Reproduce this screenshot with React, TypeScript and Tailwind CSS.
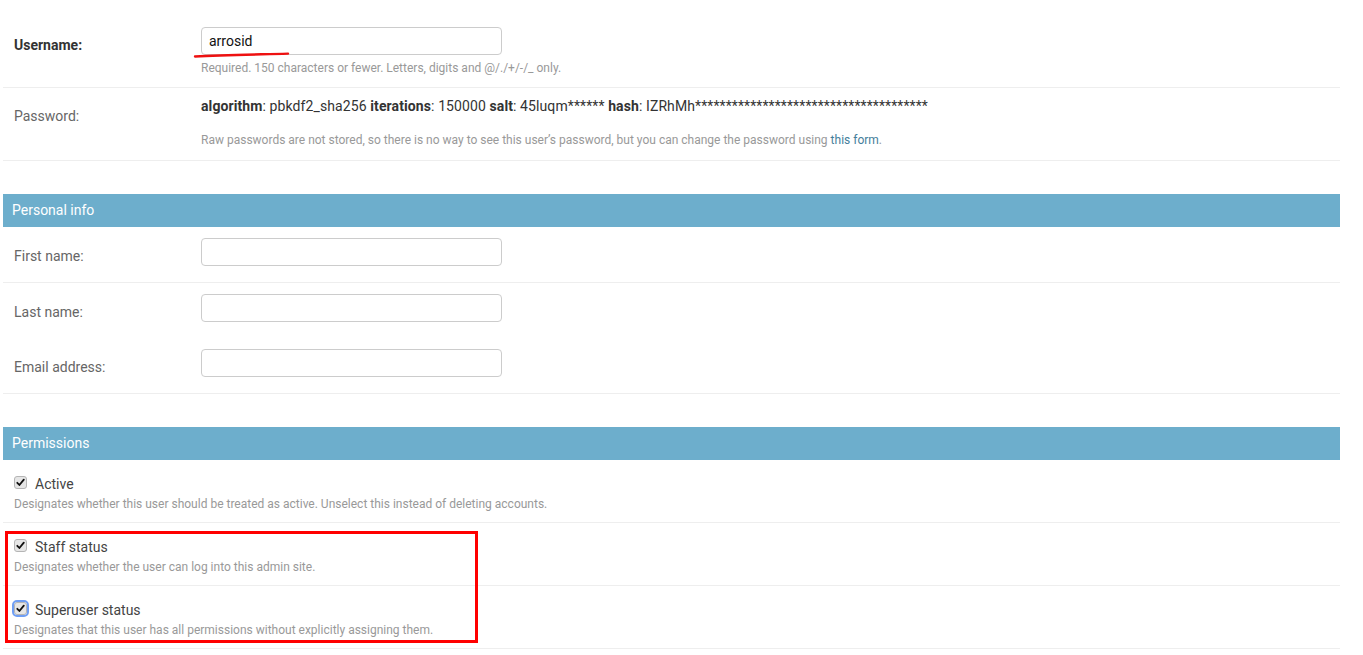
import type { ReactNode } from 'react';

const font = { fontFamily: 'Roboto, "Liberation Sans", Arial, sans-serif' };

function Row({ children, className = '' }: { children: ReactNode; className?: string }) {
  return <div className={`flex border-b border-[#eee] pl-[11px] ${className}`}>{children}</div>;
}

function Label({ children, bold }: { children: ReactNode; bold?: boolean }) {
  return (
    <div className={`w-[187px] shrink-0 pt-[10px] text-[14px] leading-4 ${bold ? 'font-bold text-[#333]' : 'text-[#666]'}`}>
      {children}
    </div>
  );
}

function TextInput({ value = '' }: { value?: string }) {
  return (
    <div className="flex h-[28px] w-[301px] items-center rounded-[4px] border border-[#ccc] bg-white px-[7px] text-[14px] text-[#111]">
      {value}
    </div>
  );
}

function Help({ children }: { children: ReactNode }) {
  return <p className="text-[12px] leading-[15px] text-[#999]">{children}</p>;
}

function Header({ children }: { children: ReactNode }) {
  return <div className="flex h-[33px] items-center bg-[#6daecc] px-[9px] text-[14px] text-white">{children}</div>;
}

function Checkbox({ focused }: { focused?: boolean }) {
  return (
    <span className={`grid h-[13px] w-[13px] shrink-0 place-items-center rounded-[3px] border border-[#b5b5b5] bg-[#e6e6e6] ${focused ? 'outline outline-[2.5px] outline-[#6f9ef3]' : ''}`}>
      <svg width="9" height="9" viewBox="0 0 9 9">
        <path d="M1.3 4.8 L3.4 7 L7.8 1.6" fill="none" stroke="#111" strokeWidth="1.8" strokeLinecap="round" strokeLinejoin="round" />
      </svg>
    </span>
  );
}

function CheckRow({ label, help, focused }: { label: string; help: string; focused?: boolean }) {
  return (
    <Row className="flex-col pt-[14px] pb-[10px]">
      <div className="flex h-5 items-center gap-2">
        <span className="-mt-[4px]"><Checkbox focused={focused} /></span>
        <span className="text-[14px] text-[#444]">{label}</span>
      </div>
      <div className="mt-[3px]">
        <Help>{help}</Help>
      </div>
    </Row>
  );
}

export default function App() {
  return (
    <div className="min-h-[655px] bg-white pt-[17px]" style={font}>
      <div className="ml-[3px] w-[1337px]">
        <Row className="pt-[10px] pb-[11px]">
          <Label bold>Username:</Label>
          <div className="relative">
            <TextInput value="arrosid" />
            <svg className="absolute left-[-8px] top-[24px]" width="100" height="8" viewBox="0 0 100 8">
              <path d="M2 5.5 C 30 4.2, 60 3.6, 95 2.6" fill="none" stroke="#ee1111" strokeWidth="2.4" strokeLinecap="round" />
            </svg>
            <div className="mt-[6px]">
              <Help>Required. 150 characters or fewer. Letters, digits and @/./+/-/_ only.</Help>
            </div>
          </div>
        </Row>
        <Row className="pt-[10px] pb-[12px]">
          <Label>Password:</Label>
          <div>
            <div className="text-[14px] leading-4 tracking-[0.1px] text-[#333]">
              <strong>algorithm</strong>: pbkdf2_sha256 <strong>iterations</strong>: 150000 <strong>salt</strong>: 45luqm****** <strong>hash</strong>: IZRhMh**************************************
            </div>
            <div className="mt-[19px]">
              <Help>
                Raw passwords are not stored, so there is no way to see this user’s password, but you can change the password using{' '}
                <span className="text-[#447e9b]">this form</span>.
              </Help>
            </div>
          </div>
        </Row>

        <div className="mt-[33px]">
          <Header>Personal info</Header>
          <Row className="pt-[11px] pb-[16px]">
            <Label>First name:</Label>
            <TextInput />
          </Row>
          <Row className="border-transparent pt-[11px] pb-[15px]">
            <Label>Last name:</Label>
            <TextInput />
          </Row>
          <Row className="pt-[11px] pb-[16px]">
            <Label>Email address:</Label>
            <TextInput />
          </Row>
        </div>

        <div className="mt-[33px]">
          <Header>Permissions</Header>
          <CheckRow label="Active" help="Designates whether this user should be treated as active. Unselect this instead of deleting accounts." />
          <div className="relative">
            <CheckRow label="Staff status" help="Designates whether the user can log into this admin site." />
            <CheckRow label="Superuser status" help="Designates that this user has all permissions without explicitly assigning them." focused />
            <div className="pointer-events-none absolute left-[2px] top-[8px] h-[112px] w-[473px] border-[3px] border-[#ff0000]" />
          </div>
        </div>
      </div>
    </div>
  );
}
